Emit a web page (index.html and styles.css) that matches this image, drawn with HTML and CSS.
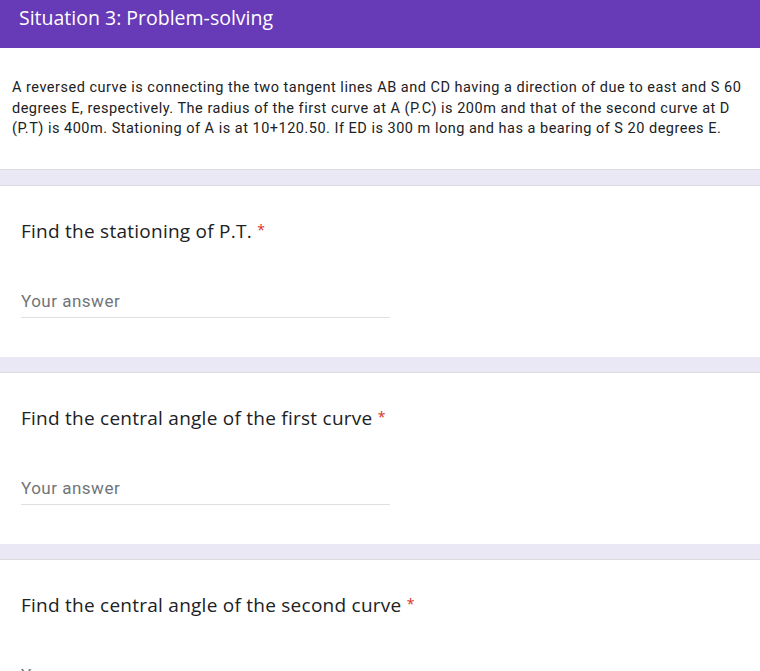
FILE: index.html
```html
<!DOCTYPE html>
<html lang="en">
<head>
    <meta charset="UTF-8">
    <meta name="viewport" content="width=device-width, initial-scale=1.0">
    <title>Situation 3: Problem-solving</title>
    <link rel="stylesheet" href="styles.css">
</head>
<body>

    <!-- Section header -->
    <div class="section-header">
        <div class="section-title">Situation 3: Problem-solving</div>
    </div>
    <div class="section-desc">
        A reversed curve is connecting the two tangent lines AB and CD having a direction of due to east and S 60 degrees E, respectively. The radius of the first curve at A (P.C) is 200m and that of the second curve at D (P.T) is 400m. Stationing of A is at 10+120.50. If ED is 300 m long and has a bearing of S 20 degrees E.
    </div>

    <!-- Questions -->
    <div class="question">
        <div class="question-title">Find the stationing of P.T. <span class="required">*</span></div>
        <input class="answer" type="text" placeholder="Your answer">
    </div>

    <div class="question">
        <div class="question-title">Find the central angle of the first curve <span class="required">*</span></div>
        <input class="answer" type="text" placeholder="Your answer">
    </div>

    <div class="question">
        <div class="question-title">Find the central angle of the second curve <span class="required">*</span></div>
        <input class="answer" type="text" placeholder="Your answer">
    </div>

</body>
</html>
```

FILE: styles.css
```css
/* General */
body {
    margin: 0;
    background: #ebe8f6;
    font-family: Roboto, "Liberation Sans", sans-serif;
    color: #202124;
}

/* Section header */
.section-header {
    background: #673ab7;
    height: 48px;
    padding: 0 19px;
}

.section-title {
    color: #fff;
    font-family: "Open Sans", sans-serif;
    font-size: 19.5px;
    line-height: 36px;
}

.section-desc {
    background: #fff;
    font-size: 14.5px;
    letter-spacing: 0.5px;
    line-height: 20.5px;
    padding: 30px 6px 29px 12px;
    border-bottom: 1px solid #dadce0;
}

/* Question cards */
.question {
    background: #fff;
    margin-top: 15px;
    padding: 32px 21px 39px;
    border-top: 1px solid #dadce0;
}

.question-title {
    font-family: "Open Sans", sans-serif;
    font-size: 19px;
    letter-spacing: 0.25px;
    line-height: 24px;
    margin-bottom: 48px;
}

.required {
    color: #d93025;
    font-size: 14px;
    vertical-align: 3px;
}

.answer {
    display: block;
    width: 369px;
    box-sizing: content-box;
    border: none;
    border-bottom: 1px solid #e0e0e0;
    padding: 0 0 6px;
    font-family: Roboto, sans-serif;
    font-size: 17px;
    letter-spacing: 0.5px;
    line-height: 20px;
    height: 20px;
    outline: none;
}

.answer::placeholder {
    color: #70757a;
}
```
